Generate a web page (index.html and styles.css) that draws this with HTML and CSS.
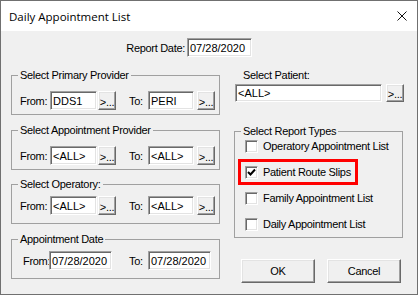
FILE: index.html
```html
<!DOCTYPE html>
<html>
<head>
<meta charset="utf-8">
<link rel="stylesheet" href="styles.css">
</head>
<body>
<div class="window">
  <div class="titlebar">
    <span class="title">Daily Appointment List</span>
    <svg class="close" width="10" height="10" viewBox="0 0 10 10"><path d="M0.5 0.5L9.5 9.5M9.5 0.5L0.5 9.5" stroke="#111" stroke-width="1" fill="none"/></svg>
  </div>
  <div class="content">
    <div class="report-date">
      <span class="rd-label">Report Date:</span>
      <div class="field rd-input">07/28/2020</div>
    </div>
    <div class="columns">
      <div class="left">
        <fieldset class="group g1">
          <legend>Select Primary Provider</legend>
          <div class="row">
            <span class="lbl-from">From:</span>
            <div class="field w47">DDS1</div>
            <div class="btn-small b1">&gt;...</div>
            <span class="lbl-to">To:</span>
            <div class="field w46">PERI</div>
            <div class="btn-small b2">&gt;...</div>
          </div>
        </fieldset>
        <fieldset class="group g2">
          <legend>Select Appointment Provider</legend>
          <div class="row">
            <span class="lbl-from">From:</span>
            <div class="field w47">&lt;ALL&gt;</div>
            <div class="btn-small b1">&gt;...</div>
            <span class="lbl-to">To:</span>
            <div class="field w46">&lt;ALL&gt;</div>
            <div class="btn-small b2">&gt;...</div>
          </div>
        </fieldset>
        <fieldset class="group g3">
          <legend>Select Operatory:</legend>
          <div class="row">
            <span class="lbl-from">From:</span>
            <div class="field w47">&lt;ALL&gt;</div>
            <div class="btn-small b1">&gt;...</div>
            <span class="lbl-to">To:</span>
            <div class="field w46">&lt;ALL&gt;</div>
            <div class="btn-small b2">&gt;...</div>
          </div>
        </fieldset>
        <fieldset class="group g4">
          <legend>Appointment Date</legend>
          <div class="row row-date">
            <span class="lbl-from2">From:</span>
            <div class="field w63">07/28/2020</div>
            <span class="lbl-to2">To:</span>
            <div class="field w63">07/28/2020</div>
          </div>
        </fieldset>
      </div>
      <div class="right">
        <div class="patient-label">Select Patient:</div>
        <div class="patient-row">
          <div class="field patient-input">&lt;ALL&gt;</div>
          <div class="btn-small patient-btn">&gt;...</div>
        </div>
        <fieldset class="group types">
          <legend>Select Report Types</legend>
          <div class="checks">
            <div class="check-row"><span class="cb"></span><span>Operatory Appointment List</span></div>
            <div class="check-row highlight"><span class="cb"><svg width="9" height="9" viewBox="0 0 9 9"><polyline points="1,4 3.5,6.5 8,1.5" fill="none" stroke="#000" stroke-width="2"/></svg></span><span>Patient Route Slips</span></div>
            <div class="check-row"><span class="cb"></span><span>Family Appointment List</span></div>
            <div class="check-row"><span class="cb"></span><span>Daily Appointment List</span></div>
          </div>
        </fieldset>
        <div class="buttons">
          <div class="btn">OK</div>
          <div class="btn">Cancel</div>
        </div>
      </div>
    </div>
  </div>
</div>
</body>
</html>
```
FILE: styles.css
```css
* { box-sizing: border-box; }
body {
  margin: 0;
  background: #fff;
  font-family: "Liberation Sans", Arial, sans-serif;
  font-size: 11px;
  letter-spacing: -0.3px;
  color: #000;
}
.window {
  width: 418px;
  height: 295px;
  border: 1px solid #707070;
  background: #f0f0f0;
  display: flex;
  flex-direction: column;
}
.titlebar {
  height: 30px;
  flex: none;
  background: #fff;
  display: flex;
  align-items: center;
  justify-content: space-between;
  padding: 0 10px 0 8px;
}
.title {
  font-family: "Open Sans", "Noto Sans", sans-serif;
  font-size: 11.5px;
  letter-spacing: 0;
  color: #000;
}
.close { display: block; }
.content {
  flex: 1;
  padding: 7px 0 0 10px;
}
.report-date {
  display: flex;
  align-items: center;
  height: 19px;
}
.rd-label {
  width: 174px;
  text-align: right;
  margin-right: 2px;
}
.rd-input { width: 65px; }

.field {
  background: #fff;
  height: 19px;
  border: 1px solid;
  border-color: #a0a0a0 #fff #fff #a0a0a0;
  box-shadow: inset 1px 1px 0 #696969, inset -1px -1px 0 #e3e3e3;
  padding: 0 0 0 2px;
  display: flex;
  align-items: center;
  white-space: nowrap;
  overflow: hidden;
  letter-spacing: 0;
}
.btn-small {
  width: 18px;
  height: 19px;
  background: #f0f0f0;
  border: 1px solid;
  border-color: #fff #696969 #696969 #fff;
  box-shadow: inset -1px -1px 0 #a0a0a0, inset 1px 1px 0 #e3e3e3;
  display: flex;
  align-items: center;
  justify-content: center;
  padding-top: 2px;
  white-space: nowrap;
}

.columns {
  display: flex;
  margin-top: 12px;
}
.left {
  width: 209px;
  display: flex;
  flex-direction: column;
}
.right {
  width: 170px;
  margin-left: 14px;
}

.group {
  margin: 0;
  padding: 0 0 0 6px;
  border: 1px solid #a0a0a0;
  min-width: 0;
}
.group legend {
  padding: 0 2px;
  line-height: 13px;
}
.g1 { padding-top: 9px; padding-bottom: 4px; }
.g2 { margin-top: 9px; padding-top: 9px; padding-bottom: 4px; }
.g3 { margin-top: 8px; padding-top: 5px; padding-bottom: 8px; }
.g4 { margin-top: 9px; padding-top: 5px; padding-bottom: 8px; }

.row {
  display: flex;
  align-items: center;
  height: 19px;
  padding-left: 2px;
}
.lbl-from { width: 30px; }
.w47 { width: 47px; }
.w46 { width: 46px; }
.w63 { width: 63px; }
.b1 { margin-left: 1px; }
.lbl-to { margin-left: 13px; width: 19px; }
.b2 { margin-left: 3px; }
.row-date { padding-left: 5px; }
.lbl-from2 { width: 26px; }
.lbl-to2 { margin-left: 17px; width: 19px; }

.patient-label {
  padding-left: 9px;
  line-height: 13px;
}
.patient-row {
  display: flex;
  margin-top: 2px;
}
.patient-input {
  width: 148px;
  height: 18px;
  margin-left: 1px;
}
.patient-btn {
  margin-left: 4px;
  height: 18px;
}

.types {
  margin-top: 23px;
  width: 169px;
  padding-bottom: 3px;
}
.checks {
  display: flex;
  flex-direction: column;
  gap: 6px;
  margin-top: -2px;
}
.check-row {
  display: flex;
  align-items: center;
  height: 20px;
  padding-left: 4px;
  white-space: nowrap;
}
.highlight {
  border: 3px solid #f00;
  margin: -3px 0 -3px -3px;
  height: 26px;
  width: 120px;
}
.cb {
  width: 13px;
  height: 13px;
  flex: none;
  background: #fff;
  border: 1px solid;
  border-color: #a0a0a0 #fff #fff #a0a0a0;
  box-shadow: inset 1px 1px 0 #696969, inset -1px -1px 0 #e3e3e3;
  margin-right: 5px;
  display: flex;
  align-items: center;
  justify-content: center;
}
.cb svg { display: block; }

.buttons {
  display: flex;
  gap: 12px;
  margin-top: 21px;
  padding-left: 7px;
}
.btn {
  width: 74px;
  height: 24px;
  background: #f0f0f0;
  border: 1px solid;
  border-color: #fff #696969 #696969 #fff;
  box-shadow: inset -1px -1px 0 #a0a0a0, inset 1px 1px 0 #e3e3e3;
  display: flex;
  align-items: center;
  justify-content: center;
}
```
